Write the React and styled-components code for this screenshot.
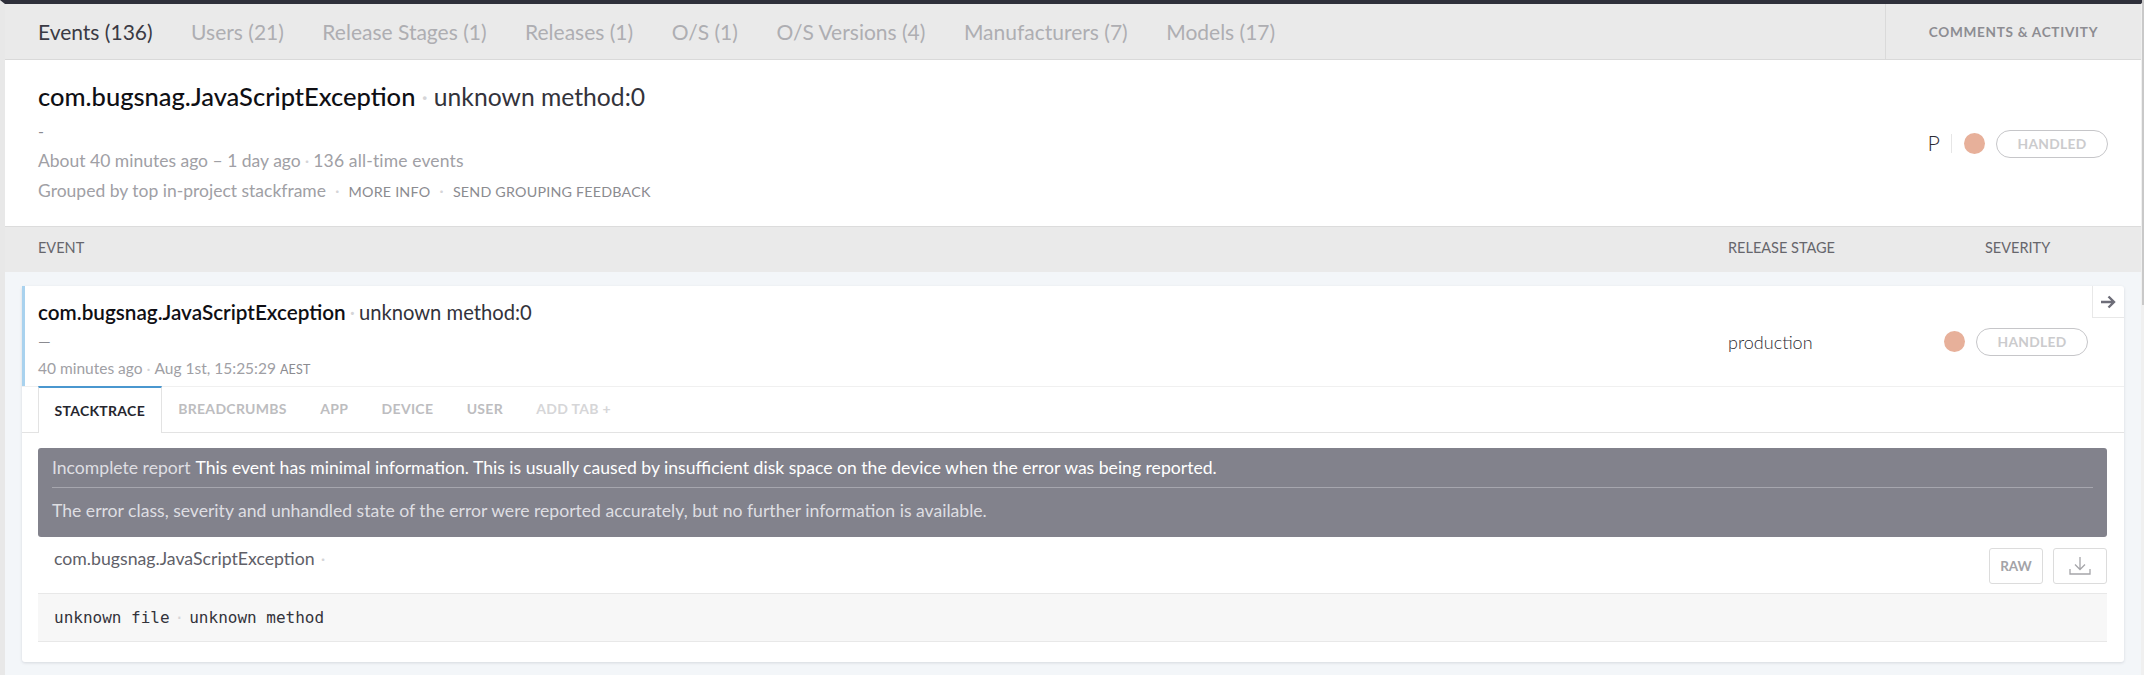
import React from 'react';
import styled, { createGlobalStyle } from 'styled-components';

const GlobalStyle = createGlobalStyle`
  html, body {
    margin: 0;
    padding: 0;
    background: #f3f6f9;
    font-family: "Lato", "Liberation Sans", sans-serif;
    color: #2b2b33;
  }
`;

const Viewport = styled.div`
  position: relative;
  width: 2144px;
  height: 675px;
  overflow: hidden;
`;

const ScrollThumb = styled.div`
  position: absolute;
  top: 0;
  right: 0;
  width: 2px;
  height: 305px;
  background: #c9c9c9;
`;

const Page = styled.div`
  height: 100%;
  box-sizing: border-box;
  border-top: 4px solid #2f303b;
  border-left: 5px solid #e8e8e8;
  border-right: 3px solid #f0f0f0;
  display: flex;
  flex-direction: column;
`;

const TabBar = styled.div`
  height: 55px;
  flex: none;
  display: flex;
  justify-content: space-between;
  background: #eaeaea;
  border-bottom: 1px solid #d9d9d9;
`;

const TabList = styled.div`
  display: flex;
  align-items: center;
  padding-left: 33px;
  gap: 38.5px;
`;

const Tab = styled.span`
  font-size: 21px;
  color: ${p => (p.$active ? '#3a3a44' : '#aeaeb2')};
`;

const ActivityTab = styled.div`
  width: 256px;
  box-sizing: border-box;
  border-left: 1px solid #dadada;
  display: flex;
  align-items: center;
  justify-content: center;
  font-size: 13.6px;
  font-weight: 700;
  letter-spacing: 0.7px;
  color: #8d8d92;
`;

const Summary = styled.div`
  height: 167px;
  flex: none;
  box-sizing: border-box;
  background: #fff;
  border-bottom: 1px solid #dcdcdc;
  padding: 0 33px 0 33px;
  display: flex;
  justify-content: space-between;
  align-items: center;
`;

const SummaryText = styled.div`
  align-self: flex-start;
  display: flex;
  flex-direction: column;
  padding-top: ${p => p.$top || 0}px;
`;

const Title = styled.div`
  font-size: ${p => p.$size}px;
  line-height: 28px;
  white-space: nowrap;
  color: #33333b;

  b {
    font-size: ${p => p.$boldSize}px;
    font-weight: ${p => p.$boldWeight};
    color: #0f0f14;
  }
`;

const Dot = styled.span`
  color: #d5d5d8;
  margin: 0 ${p => p.$gap || 5}px;
`;

const Dash = styled.div`
  color: #8a8a90;
  font-size: 16px;
  line-height: 20px;
  margin-top: ${p => p.$top}px;
`;

const Meta = styled.div`
  color: #a0a0a5;
  font-size: ${p => p.$size || 17.5}px;
  line-height: 24px;
  margin-top: ${p => p.$top || 0}px;
  white-space: nowrap;
`;

const AllTimeCount = styled.span`
  letter-spacing: 0.15px;
`;

const SmallLink = styled.span`
  font-size: ${p => p.$size || 14.3}px;
  color: #8b8b90;
  letter-spacing: 0.2px;
`;

const SeverityGroup = styled.div`
  display: flex;
  align-items: center;
  padding-top: 1px;
`;

const ProjectLetter = styled.span`
  font-size: 21.5px;
  font-weight: 300;
  color: #2b2b33;
  padding-right: 11px;
  margin-right: 12px;
  border-right: 1px solid #e6e6e6;
  line-height: 19px;
`;

const SeverityDot = styled.span`
  width: 21px;
  height: 21px;
  border-radius: 50%;
  background: #e7b09a;
  margin-right: 11px;
`;

const Pill = styled.span`
  width: 112px;
  height: 28px;
  box-sizing: border-box;
  border: 1px solid #c6c6c9;
  border-radius: 14px;
  display: flex;
  align-items: center;
  justify-content: center;
  font-size: 13.8px;
  font-weight: 700;
  letter-spacing: 0.3px;
  color: #cbcbcd;
`;

const TableHead = styled.div`
  height: 45px;
  flex: none;
  box-sizing: border-box;
  background: #eaeaea;
  display: grid;
  grid-template-columns: 1fr 257px 156px;
  align-items: center;
  padding: 0 0 5px 33px;
  font-size: 14.5px;
  color: #66666c;
`;

const Body = styled.div`
  flex: 1;
  padding: 14px 17px 0 17px;
`;

const Card = styled.div`
  position: relative;
  height: 376px;
  background: #fff;
  border-radius: 3px;
  box-shadow: 0 1px 3px rgba(60, 70, 90, 0.16);
  display: flex;
  flex-direction: column;
`;

const EventHeader = styled.div`
  height: 100px;
  flex: none;
  box-sizing: border-box;
  border-left: 3px solid #a9d2ee;
  padding: 11px 36px 0 13px;
  display: flex;
  justify-content: space-between;
  align-items: center;
`;

const EventSeverity = styled.div`
  display: flex;
  align-items: center;
  width: 360px;
`;

const Stage = styled.span`
  width: 216px;
  font-size: 18px;
  font-weight: 300;
  color: #2b2b33;
`;

const ArrowBox = styled.div`
  position: absolute;
  top: 0;
  right: 0;
  width: 32px;
  height: 32px;
  box-sizing: border-box;
  padding-right: 1px;
  border-left: 1px solid #e8e8e8;
  border-bottom: 1px solid #e8e8e8;
  display: flex;
  align-items: center;
  justify-content: center;
`;

const EventTabs = styled.div`
  height: 47px;
  flex: none;
  box-sizing: border-box;
  border-top: 1px solid #f0f0f0;
  border-bottom: 1px solid #e3e3e3;
  padding-left: 16px;
  display: flex;
  align-items: stretch;
`;

const EventTab = styled.div`
  display: flex;
  align-items: center;
  padding: 0 16.7px 2px;
  font-size: 14px;
  font-weight: 700;
  letter-spacing: 0.3px;
  color: ${p => (p.$faint ? '#d6d6d8' : '#bdbdc0')};
`;

const ActiveEventTab = styled(EventTab)`
  padding: 0 15.500px 1px;
  margin-top: -1px;
  margin-bottom: -1px;
  background: #fff;
  color: #26262e;
  border-top: 2px solid #4a97cf;
  border-left: 1px solid #e3e3e3;
  border-right: 1px solid #e3e3e3;
`;

const Content = styled.div`
  padding: 15px 17px 0 16px;
`;

const Alert = styled.div`
  height: 89px;
  box-sizing: border-box;
  background: #82828c;
  border-radius: 3px;
  padding: 0 14px;
  display: flex;
  flex-direction: column;
  color: #dedee2;
  font-size: 17.6px;
`;

const AlertRow = styled.div`
  height: ${p => p.$height}px;
  flex: none;
  box-sizing: border-box;
  display: flex;
  align-items: center;
  gap: 5px;
  white-space: nowrap;
  ${p => p.$divided && 'border-bottom: 1px solid #a6a6ae;'}

  strong {
    font-weight: 400;
    color: #fff;
  }
`;

const FrameHead = styled.div`
  height: 56px;
  display: flex;
  justify-content: space-between;
  padding: 11px 0 0 16px;
  box-sizing: border-box;
  font-size: 17.7px;
  color: #606068;
`;

const FrameActions = styled.div`
  display: flex;
  gap: 10px;
`;

const ToolButton = styled.div`
  height: 36px;
  width: 54px;
  box-sizing: border-box;
  border: 1px solid #dcdcdc;
  border-radius: 3px;
  display: flex;
  align-items: center;
  justify-content: center;
  font-size: 13.5px;
  font-weight: 700;
  color: #a3a3a7;
`;

const CodeRow = styled.div`
  height: 49px;
  box-sizing: border-box;
  background: #f7f7f7;
  border-top: 1px solid #e8e8e8;
  border-bottom: 1px solid #e8e8e8;
  padding-left: 16px;
  display: flex;
  align-items: center;
  font-family: "DejaVu Sans Mono", "Liberation Mono", monospace;
  font-size: 16px;
  color: #33333b;
`;

const ArrowIcon = () => (
  <svg width="16" height="14" viewBox="0 0 16 14" fill="none" stroke="#6d6d78" strokeWidth="2.400">
    <path d="M1 7h13M8.500 1.500L14 7l-5.500 5.500" />
  </svg>
);

const DownloadIcon = () => (
  <svg width="24" height="20" viewBox="0 0 24 20" fill="none" stroke="#a5a5a9" strokeWidth="1.300">
    <path d="M12 1v12M7 8.500l5 5 5-5M2 13v5h20v-5" />
  </svg>
);

const tabs = ['Users (21)', 'Release Stages (1)', 'Releases (1)', 'O/S (1)', 'O/S Versions (4)', 'Manufacturers (7)', 'Models (17)'];

export default function App() {
  return (
    <Viewport>
      <GlobalStyle />
      <Page>
        <TabBar>
          <TabList>
            <Tab $active>Events (136)</Tab>
            {tabs.map(t => <Tab key={t}>{t}</Tab>)}
          </TabList>
          <ActivityTab>COMMENTS &amp; ACTIVITY</ActivityTab>
        </TabBar>

        <Summary>
          <SummaryText $top={22}>
            <Title $size={24.7} $boldSize={25.5} $boldWeight={500}><b>com.bugsnag.JavaScriptException</b><Dot $gap={6}>·</Dot>unknown method:0</Title>
            <Dash $top={10}>-</Dash>
            <Meta $top={8}>About 40 minutes ago – 1 day ago<Dot $gap={4}>·</Dot><AllTimeCount>136 all-time events</AllTimeCount></Meta>
            <Meta $top={6}>
              Grouped by top in-project stackframe<Dot $gap={9}>·</Dot><SmallLink>MORE INFO</SmallLink><Dot $gap={9}>·</Dot><SmallLink>SEND GROUPING FEEDBACK</SmallLink>
            </Meta>
          </SummaryText>
          <SeverityGroup>
            <ProjectLetter>P</ProjectLetter>
            <SeverityDot />
            <Pill>HANDLED</Pill>
          </SeverityGroup>
        </Summary>

        <TableHead>
          <span>EVENT</span>
          <span>RELEASE STAGE</span>
          <span>SEVERITY</span>
        </TableHead>

        <Body>
          <Card>
            <ArrowBox><ArrowIcon /></ArrowBox>
            <EventHeader>
              <SummaryText $top={1}>
                <Title $size={20.2} $boldSize={20.7} $boldWeight={600}><b>com.bugsnag.JavaScriptException</b><Dot $gap={4}>·</Dot>unknown method:0</Title>
                <Dash $top={5}>—</Dash>
                <Meta $top={5} $size={15.500}>40 minutes ago<Dot $gap={4}>·</Dot>Aug 1st, 15:25:29 <SmallLink $size={12.500}>AEST</SmallLink></Meta>
              </SummaryText>
              <EventSeverity>
                <Stage>production</Stage>
                <SeverityDot />
                <Pill>HANDLED</Pill>
              </EventSeverity>
            </EventHeader>

            <EventTabs>
              <ActiveEventTab>STACKTRACE</ActiveEventTab>
              <EventTab>BREADCRUMBS</EventTab>
              <EventTab>APP</EventTab>
              <EventTab>DEVICE</EventTab>
              <EventTab>USER</EventTab>
              <EventTab $faint>ADD TAB +</EventTab>
            </EventTabs>

            <Content>
              <Alert>
                <AlertRow $height={40} $divided>
                  Incomplete report <strong>This event has minimal information. This is usually caused by insufficient disk space on the device when the error was being reported.</strong>
                </AlertRow>
                <AlertRow $height={45}>
                  The error class, severity and unhandled state of the error were reported accurately, but no further information is available.
                </AlertRow>
              </Alert>
              <FrameHead>
                <span>com.bugsnag.JavaScriptException<Dot $gap={6}>·</Dot></span>
                <FrameActions>
                  <ToolButton>RAW</ToolButton>
                  <ToolButton><DownloadIcon /></ToolButton>
                </FrameActions>
              </FrameHead>
              <CodeRow>unknown file<Dot $gap={5}>·</Dot>unknown method</CodeRow>
            </Content>
          </Card>
        </Body>
      </Page>
      <ScrollThumb />
    </Viewport>
  );
}
